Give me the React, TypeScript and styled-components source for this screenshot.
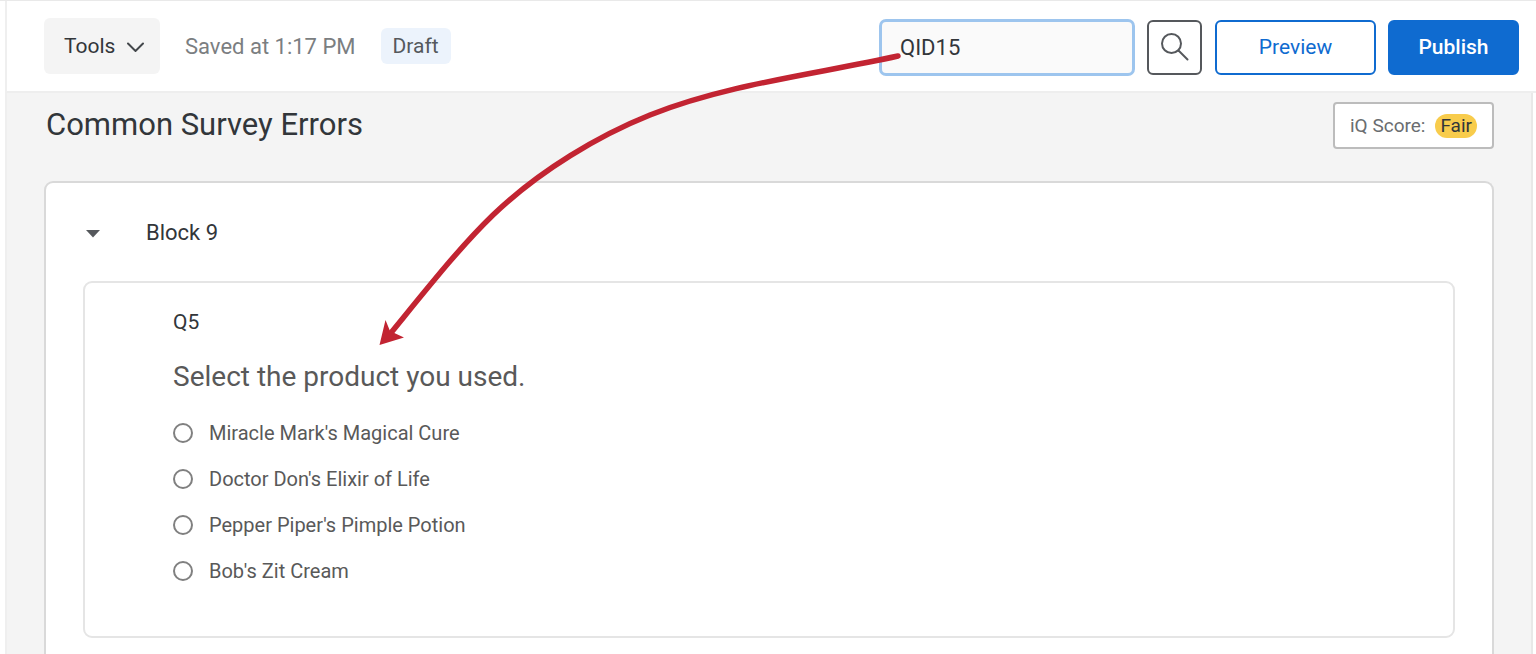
import React from "react";
import styled, { createGlobalStyle } from "styled-components";

const GlobalStyle = createGlobalStyle`
  *, *::before, *::after { box-sizing: border-box; }
  body {
    margin: 0;
    background: #ffffff;
    color: #32363a;
    font-family: Roboto, "Liberation Sans", sans-serif;
    font-size: 22px;
  }
  button, input { font: inherit; color: inherit; margin: 0; }
`;

const Page = styled.div`
  position: relative;
  display: flex;
  flex-direction: column;
  min-height: 100vh;
  padding-left: 5px;
  border-top: 1px solid #e9e9e9;
`;

const Toolbar = styled.header`
  display: flex;
  align-items: center;
  justify-content: space-between;
  height: 92px;
  padding: 0 17px 0 37px;
  border-left: 2px solid #efefef;
  border-bottom: 2px solid #eeeeee;
`;

const ToolbarGroup = styled.div<{ $gap: number }>`
  display: flex;
  align-items: center;
  gap: ${(p) => p.$gap}px;
`;

const ToolsButton = styled.button`
  display: flex;
  align-items: center;
  justify-content: space-between;
  width: 116px;
  height: 56px;
  padding: 0 16px 0 20px;
  border: 0;
  border-radius: 6px;
  background: #f4f4f4;
  font-size: 21px;
`;

const SavedText = styled.span`
  color: #7b7e81;
`;

const StatusTag = styled.span`
  padding: 0 12px;
  border-radius: 6px;
  background: #ecf3fc;
  color: #55595d;
  font-size: 21px;
  line-height: 36px;
`;

const SearchInput = styled.input`
  width: 256px;
  height: 57px;
  padding: 0 18px;
  border: 3px solid #9dc5ee;
  border-radius: 7px;
  background: #fafafa;
  outline: none;
`;

const ToolbarButton = styled.button<{ $width: number; $tone: "icon" | "outline" | "solid" }>`
  display: flex;
  align-items: center;
  justify-content: center;
  width: ${(p) => p.$width}px;
  height: 55px;
  padding: 0;
  border: 2px solid ${(p) => (p.$tone === "icon" ? "#55585c" : "#0f6bd0")};
  border-radius: 6px;
  background: ${(p) => (p.$tone === "solid" ? "#0f6bd0" : "#ffffff")};
  color: ${(p) => (p.$tone === "icon" ? "#55585c" : p.$tone === "solid" ? "#ffffff" : "#0f6bd0")};
  font-size: 21px;
  font-weight: ${(p) => (p.$tone === "solid" ? 500 : 400)};
`;

const Actions = styled.div`
  display: flex;
  align-items: center;
  gap: 12px;
  padding-top: 2px;
`;

const Workspace = styled.main`
  flex: 1;
  display: flex;
  flex-direction: column;
  margin-right: 3px;
  padding: 9px 37px 0 37px;
  border-left: 2px solid #efefef;
  border-right: 2px solid #e8e8e8;
  background: #f4f4f4;
`;

const TitleRow = styled.div`
  display: flex;
  align-items: flex-start;
  justify-content: space-between;
  height: 79px;
`;

const SurveyTitle = styled.h1`
  margin: 5px 2px;
  font-size: 31px;
  font-weight: 400;
  line-height: 36px;
`;

const ScoreButton = styled.button`
  display: flex;
  align-items: center;
  gap: 10px;
  height: 47px;
  padding: 0 15px;
  border: 2px solid #bcbcbc;
  border-radius: 4px;
  background: #ffffff;
  color: #6a6d70;
  font-size: 19px;
`;

const ScoreValue = styled.span`
  padding: 0 5px;
  border-radius: 12px;
  background: #f8cc4c;
  color: #32363a;
  line-height: 24px;
`;

const BlockCard = styled.section`
  flex: 1;
  padding: 0 37px 16px;
  border: 2px solid #d9d9d9;
  border-bottom: 0;
  border-radius: 9px 9px 0 0;
  background: #ffffff;
`;

const BlockHeader = styled.div`
  display: flex;
  align-items: center;
  gap: 46px;
  height: 98px;
`;

const CollapseButton = styled.button`
  display: flex;
  padding: 4px 0 0 3px;
  border: 0;
  background: none;
`;

const BlockName = styled.h2`
  margin: 0;
  font-size: 22px;
  font-weight: 400;
`;

const QuestionCard = styled.article`
  height: 357px;
  padding: 25px 88px;
  border: 2px solid #e5e5e5;
  border-radius: 9px;
`;

const QuestionId = styled.div`
  font-size: 21px;
  line-height: 28px;
`;

const ChoiceSet = styled.fieldset`
  margin: 0;
  padding: 0;
  border: 0;
  color: #595959;
`;

const QuestionText = styled.legend`
  padding: 21px 0 13px;
  font-size: 28px;
  line-height: 40px;
`;

const Choice = styled.label`
  display: flex;
  align-items: center;
  gap: 16px;
  height: 46px;
  font-size: 20px;
`;

const Radio = styled.input`
  appearance: none;
  width: 20px;
  height: 20px;
  border: 2px solid #808080;
  border-radius: 50%;
  background: #ffffff;
  &:checked { background: radial-gradient(#0f6bd0 50%, #ffffff 55%); }
`;

const ArrowLayer = styled.svg`
  position: absolute;
  top: -1px;
  left: 0;
  width: 100%;
  pointer-events: none;
`;

const choices = [
  "Miracle Mark's Magical Cure",
  "Doctor Don's Elixir of Life",
  "Pepper Piper's Pimple Potion",
  "Bob's Zit Cream",
];

export default function App() {
  return (
    <>
      <GlobalStyle />
      <Page>
        <Toolbar>
          <ToolbarGroup $gap={25}>
            <ToolsButton type="button">
              Tools
              <svg width="18" height="12" viewBox="0 0 18 12" fill="none" stroke="#43474b" strokeWidth="2" strokeLinecap="round" aria-hidden="true">
                <path d="M2 3.500 9.500 11 17 3.500" />
              </svg>
            </ToolsButton>
            <SavedText>Saved at 1:17 PM</SavedText>
            <StatusTag>Draft</StatusTag>
          </ToolbarGroup>
          <ToolbarGroup $gap={13}>
            <Actions>
              <SearchInput type="text" aria-label="Search questions" defaultValue="QID15" />
              <ToolbarButton type="button" $width={55} $tone="icon" aria-label="Search">
                <svg width="28" height="28" viewBox="0 0 28 28" fill="none" stroke="currentColor" strokeWidth="2" strokeLinecap="round" aria-hidden="true">
                  <circle cx="10.500" cy="10.500" r="9.500" />
                  <path d="M17.500 17.500 26.500 26.500" />
                </svg>
              </ToolbarButton>
            </Actions>
            <Actions>
              <ToolbarButton type="button" $width={161} $tone="outline">Preview</ToolbarButton>
              <ToolbarButton type="button" $width={131} $tone="solid">Publish</ToolbarButton>
            </Actions>
          </ToolbarGroup>
        </Toolbar>
        <Workspace>
          <TitleRow>
            <SurveyTitle>Common Survey Errors</SurveyTitle>
            <ScoreButton type="button">
              iQ Score: <ScoreValue>Fair</ScoreValue>
            </ScoreButton>
          </TitleRow>
          <BlockCard>
            <BlockHeader>
              <CollapseButton type="button" aria-label="Collapse block">
                <svg width="14" height="8" viewBox="0 0 14 8" fill="#55585c" aria-hidden="true">
                  <path d="M0 0h14L7 7.500z" />
                </svg>
              </CollapseButton>
              <BlockName>Block 9</BlockName>
            </BlockHeader>
            <QuestionCard>
              <QuestionId>Q5</QuestionId>
              <ChoiceSet>
                <QuestionText>Select the product you used.</QuestionText>
                {choices.map((text) => (
                  <Choice key={text}>
                    <Radio type="radio" name="product" />
                    {text}
                  </Choice>
                ))}
              </ChoiceSet>
            </QuestionCard>
          </BlockCard>
        </Workspace>
        <ArrowLayer viewBox="0 0 1536 654" aria-hidden="true">
          <path d="M898 56C817 74 728 84 650 115C600 135 540 170 493 215C460 247 430 285 390 334" fill="none" stroke="#c22432" strokeWidth="5.500" strokeLinecap="round" />
          <path d="M379.500 345 385.500 320 390 331 404 337.500z" fill="#c22432" />
        </ArrowLayer>
      </Page>
    </>
  );
}
